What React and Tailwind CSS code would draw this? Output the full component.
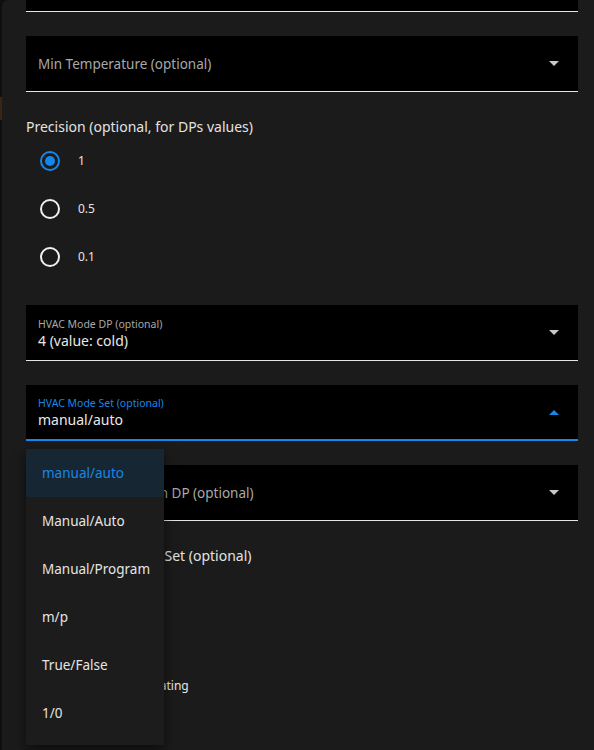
import React from "react"

const font = { fontFamily: '"Segoe UI", "Noto Sans", "Open Sans", sans-serif' }

function Arrow({ up = false }) {
  return (
    <svg width="10" height="5" viewBox="0 0 10 5" className="shrink-0">
      {up ? (
        <polygon points="0,5 5,0 10,5" fill="#1687e8" />
      ) : (
        <polygon points="0,0 10,0 5,5" fill="#c8c8c8" />
      )}
    </svg>
  )
}

function SelectField({ label, value, open = false }) {
  return (
    <div
      className={`flex h-[56px] items-center justify-between bg-black pl-3 pr-[19px] ${
        open ? "border-b-2 border-[#1687e8]" : "border-b border-[#e6e6e6]"
      }`}
    >
      {value ? (
        <div className="flex flex-col pt-[2px]">
          <span className={`text-[10.5px] leading-[14px] ${open ? "text-[#1687e8]" : "text-[#a8a8a8]"}`}>
            {label}
          </span>
          <span className="text-[14px] leading-[20px] text-[#e8e8e8]">{value}</span>
        </div>
      ) : (
        <span className="pt-[2px] text-[13.5px] text-[#a8a8a8]">{label}</span>
      )}
      <Arrow up={open} />
    </div>
  )
}

function Radio({ label, checked = false }) {
  return (
    <div className="flex h-[48px] items-center">
      <div className="flex w-[48px] justify-center">
        <div
          className={`flex h-[20px] w-[20px] items-center justify-center rounded-full border-2 ${
            checked ? "border-[#1687e8]" : "border-[#f0f0f0]"
          }`}
        >
          {checked && <div className="h-[10px] w-[10px] rounded-full bg-[#1687e8]" />}
        </div>
      </div>
      <span className="ml-1 text-[12px] text-[#e6e6e6]">{label}</span>
    </div>
  )
}

const options = ["manual/auto", "Manual/Auto", "Manual/Program", "m/p", "True/False", "1/0"]

export default function App() {
  return (
    <div className="flex h-[750px] w-[594px] overflow-hidden bg-[#0f0f0f]" style={font}>
      <div className="flex w-[2px] flex-col">
        <div className="h-[97px]" />
        <div className="h-[23px] bg-[#3a2414]" />
      </div>
      <div className="relative flex-1 rounded-tl-[6px] bg-[#1b1b1b] pl-6 pr-4">
        <div className="h-[12px] border-b border-[#e6e6e6] bg-black" />

        <div className="mt-6">
          <SelectField label="Min Temperature (optional)" />
        </div>

        <div className="mt-[25px] text-[14px] leading-[20px] text-[#e2e2e2]">
          Precision (optional, for DPs values)
        </div>
        <Radio label="1" checked />
        <Radio label="0.5" />
        <Radio label="0.1" />

        <div className="mt-6">
          <SelectField label="HVAC Mode DP (optional)" value="4 (value: cold)" />
        </div>

        <div className="relative mt-6">
          <SelectField label="HVAC Mode Set (optional)" value="manual/auto" open />

          <div className="absolute left-0 top-[64px] z-10 w-[138px] bg-[#1c1c1c] pb-2 shadow-[0_5px_12px_rgba(0,0,0,0.55)]">
            {options.map((o, i) => (
              <div
                key={o}
                className={`flex h-[48px] items-center px-4 text-[13.5px] ${
                  i === 0 ? "bg-[#172633] text-[#1687e8]" : "text-[#e4e4e4]"
                }`}
              >
                {o}
              </div>
            ))}
          </div>
        </div>

        <div className="mt-6">
          <SelectField label="HVAC Current Action DP (optional)" />
        </div>

        <div className="mt-[25px] text-[14px] leading-[20px] text-[#e2e2e2]">
          HVAC Current Action Set (optional)
        </div>
        <Radio label="True/False" />
        <Radio label="open/close" />
        <Radio label="heating/no_heating" />
      </div>
    </div>
  )
}
